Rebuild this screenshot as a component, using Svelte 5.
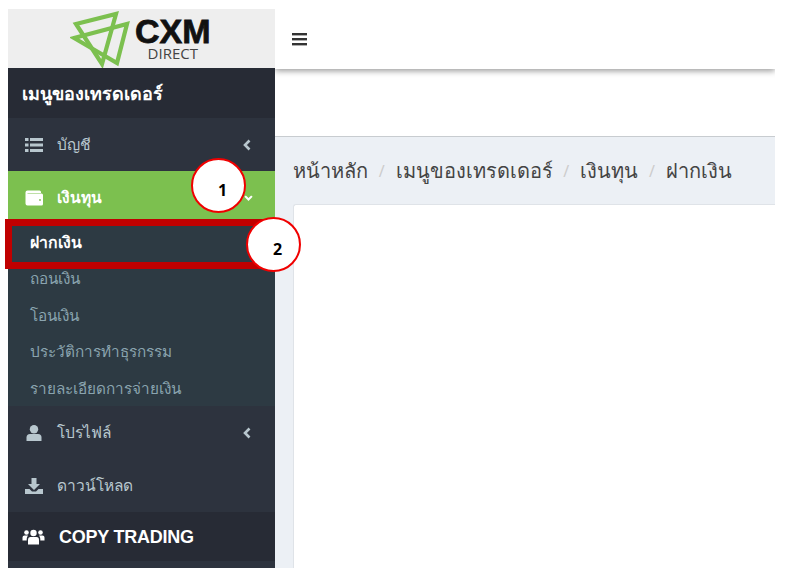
<script>
  const subs = ['ถอนเงิน', 'โอนเงิน', 'ประวัติการทำธุรกรรม', 'รายละเอียดการจ่ายเงิน'];
  const crumbs = ['หน้าหลัก', 'เมนูของเทรดเดอร์', 'เงินทุน', 'ฝากเงิน'];
</script>

<div class="page">
  <div class="shell">
    <aside class="side">
      <div class="logo">
        <svg class="mark" width="62" height="59" viewBox="70 9 62 59" fill="none" stroke="#7cc04f" stroke-width="4.2">
          <path d="M76 24 L116 14 L102 64 Z" />
          <path d="M74 38 L127 24 L117 63 Z" />
        </svg>
        <div class="brand">
          <span class="cxm">CXM</span>
          <span class="direct">DIRECT</span>
        </div>
      </div>
      <div class="head">เมนูของเทรดเดอร์</div>
      <div class="item">
        <svg class="ic" viewBox="0 0 18 16" fill="#b8c7ce"><rect x="0" y="1" width="3.5" height="3"/><rect x="5" y="1" width="13" height="3"/><rect x="0" y="6.5" width="3.5" height="3"/><rect x="5" y="6.5" width="13" height="3"/><rect x="0" y="12" width="3.5" height="3"/><rect x="5" y="12" width="13" height="3"/></svg>
        <span class="lbl">บัญชี</span>
        <svg class="chev" viewBox="0 0 8 12" fill="none" stroke="#b8c7ce" stroke-width="2.6"><path d="M6.5 1.5 L2 6 L6.5 10.5"/></svg>
      </div>
      <div class="item active">
        <svg class="ic" viewBox="0 0 18 16" fill="#fff"><path d="M2.5 3.5 H16.5 Q18 3.5 18 5 V14 Q18 15.5 16.5 15.5 H2.5 Q0.5 15.5 0.5 13.5 V2.5 Q0.5 0.5 2.5 0.5 H14.5 Q16 0.5 16 2 V3 H2.5 Z"/><circle cx="15" cy="10" r="0.9" fill="#7cc04f"/></svg>
        <span class="lbl">เงินทุน</span>
        <svg class="chev down" viewBox="0 0 12 8" fill="none" stroke="#fff" stroke-width="2.8"><path d="M1.5 1.5 L6 6 L10.5 1.5"/></svg>
      </div>
      <div class="subs">
        <div class="sub current">ฝากเงิน</div>
        {#each subs as s}
          <div class="sub">{s}</div>
        {/each}
      </div>
      <div class="item">
        <svg class="ic" viewBox="0 0 18 16" fill="#b8c7ce"><circle cx="9" cy="4.2" r="4.2"/><path d="M1.5 16 V12.5 Q1.5 9 5 9 H13 Q16.5 9 16.5 12.5 V16 Z"/></svg>
        <span class="lbl">โปรไฟล์</span>
        <svg class="chev" viewBox="0 0 8 12" fill="none" stroke="#b8c7ce" stroke-width="2.6"><path d="M6.5 1.5 L2 6 L6.5 10.5"/></svg>
      </div>
      <div class="item">
        <svg class="ic" viewBox="0 0 18 16" fill="#b8c7ce"><path d="M6.5 0 H11.5 V6 H15 L9 12 L3 6 H6.5 Z"/><path d="M0 11 H4.5 L7 13.5 H11 L13.5 11 H18 V16 H0 Z"/></svg>
        <span class="lbl">ดาวน์โหลด</span>
      </div>
      <div class="copy">
        <svg class="ic group" viewBox="0 0 22 16" fill="#fff"><circle cx="11" cy="4" r="3.2"/><circle cx="4" cy="3.5" r="2.3"/><circle cx="18" cy="3.5" r="2.3"/><path d="M5.5 15.5 V11 Q5.5 8 8 8 H14 Q16.5 8 16.5 11 V15.5 Z"/><path d="M0 11.5 V8.5 Q0 6.5 2 6.5 H5.5 Q4.2 8 4.2 10 V11.5 Z"/><path d="M22 11.5 V8.5 Q22 6.5 20 6.5 H16.5 Q17.8 8 17.8 10 V11.5 Z"/></svg>
        <span>COPY TRADING</span>
      </div>
    </aside>

    <main class="main">
      <header class="top">
        <svg class="burger" viewBox="0 0 15 13" fill="#333"><rect y="0" width="15" height="2.4"/><rect y="5" width="15" height="2.4"/><rect y="10" width="15" height="2.4"/></svg>
      </header>
      <div class="gap"></div>
      <section class="content">
        <nav class="crumbs">
          {#each crumbs as c, i}
            {#if i > 0}<span class="sep">/</span>{/if}
            <span>{c}</span>
          {/each}
        </nav>
        <div class="card"></div>
      </section>
    </main>
  </div>

  <div class="mark-box"></div>
  <div class="circle one">1</div>
  <div class="circle two">2</div>
</div>

<style>
  :global(body) { margin: 0; background: #fff; }
  .page {
    position: relative;
    width: 788px;
    height: 577px;
    padding: 9px 13px 9px 8px;
    box-sizing: border-box;
    overflow: hidden;
    font-family: "Noto Sans", "Liberation Sans", sans-serif;
  }
  .shell { display: flex; height: 559px; }
  .side {
    width: 267px;
    flex: none;
    background: #2d333e;
    display: flex;
    flex-direction: column;
  }
  .logo {
    height: 59px;
    background: #eeeeee;
    display: flex;
    align-items: flex-start;
    gap: 3px;
    box-sizing: border-box;
    padding-left: 62px;
    overflow: hidden;
    flex: none;
  }
  .brand { display: flex; flex-direction: column; align-items: center; margin-top: 9px; }
  .cxm {
    font-family: "Liberation Sans", sans-serif;
    font-weight: 700;
    font-size: 34px;
    line-height: 26px;
    color: #111;
    -webkit-text-stroke: 0.8px #111;
  }
  .direct {
    font-family: "Open Sans", sans-serif;
    font-size: 15px;
    line-height: 16px;
    color: #444;
    margin-top: 1px;
  }
  .head {
    height: 50px;
    background: #272b35;
    color: #fff;
    font-weight: 700;
    font-size: 18px;
    display: flex;
    align-items: center;
    padding-left: 14px;
    box-sizing: border-box;
    flex: none;
  }
  .item {
    height: 53px;
    display: flex;
    align-items: center;
    padding: 0 24px 0 17px;
    color: #b8c7ce;
    font-size: 15.5px;
    flex: none;
    box-sizing: border-box;
  }
  .item.active {
    background: #7cc04f;
    color: #fff;
    height: 50px;
    font-weight: 600;
    padding-top: 3px;
  }
  .ic { width: 18px; height: 16px; flex: none; }
  .lbl { margin-left: 14px; flex: 1; }
  .chev { width: 8px; height: 12px; flex: none; }
  .chev.down { width: 9px; height: 6px; margin-right: -2px; }
  .subs {
    background: #2d3a43;
    height: 185px;
    flex: none;
    display: flex;
    flex-direction: column;
  }
  .sub {
    height: 36.5px;
    line-height: 36.5px;
    padding-left: 22px;
    color: #8aa4af;
    font-size: 15.3px;
  }
  .sub.current { color: #fff; font-weight: 600; height: 39px; line-height: 43px; font-size: 15.8px; }
  .copy {
    height: 49px;
    background: #272b35;
    color: #fff;
    display: flex;
    align-items: center;
    padding: 1px 0 0 14px;
    box-sizing: border-box;
    font-family: "Liberation Sans", sans-serif;
    font-weight: 700;
    font-size: 18px;
    letter-spacing: -0.25px;
    flex: none;
  }
  .ic.group { width: 23px; height: 16px; margin-right: 14px; }
  .main { flex: 1; min-width: 0; display: flex; flex-direction: column; overflow: clip; overflow-clip-margin: 0; }
  .top {
    height: 60px;
    background: #fff;
    box-shadow: 0 2px 6px rgba(0, 0, 0, 0.4);
    display: flex;
    align-items: center;
    padding-left: 17px;
    flex: none;
    position: relative;
  }
  .burger { width: 15px; height: 13px; }
  .gap { height: 67px; flex: none; }
  .content {
    flex: 1;
    background: #ecf0f5;
    border-top: 1px solid #c8ccd0;
    padding: 0 0 0 18px;
    display: flex;
    flex-direction: column;
    min-height: 0;
  }
  .crumbs {
    height: 67px;
    display: flex;
    align-items: center;
    gap: 10.8px;
    color: #444;
    font-size: 20px;
    flex: none;
  }
  .sep { color: #ccc; font-size: 16px; }
  .card {
    flex: 1;
    background: #fff;
    border: 1px solid #dfe3e8;
    border-right: 0;
    border-bottom: 0;
    border-radius: 3px 0 0 0;
  }
  .mark-box {
    position: absolute;
    left: 5px;
    top: 219px;
    width: 258px;
    height: 50px;
    box-sizing: border-box;
    border: 7px solid #c00000;
  }
  .circle {
    position: absolute;
    width: 55px;
    height: 55px;
    box-sizing: border-box;
    border-radius: 50%;
    background: #fff;
    border: 2px solid #f00000;
    color: #000;
    font-family: "Open Sans", sans-serif;
    font-weight: 700;
    font-size: 16px;
    display: flex;
    align-items: center;
    justify-content: center;
    padding: 9px 0 0 8px;
  }
  .one { left: 191px; top: 158px; }
  .two { left: 246px; top: 217px; }
</style>
